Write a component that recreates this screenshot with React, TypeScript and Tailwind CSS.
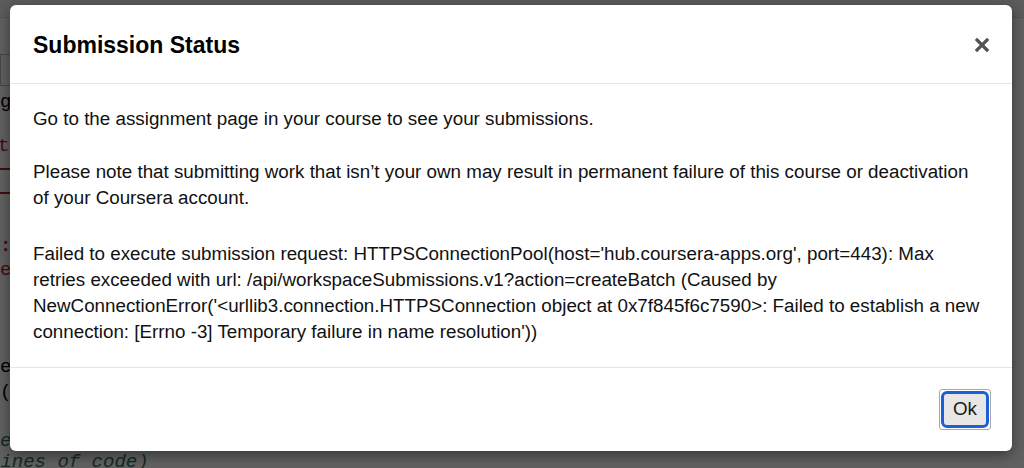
import React from "react";

const mono = { fontFamily: '"Liberation Mono", monospace' };

function Backdrop() {
  // the notebook behind the dialog, only its left and bottom edges show
  return (
    <div className="absolute inset-0 overflow-hidden bg-white" style={mono}>
      <div className="h-[18px] bg-[#f2f2f2] border-b border-[#ddd]" />
      <div className="mt-[36px] h-[32px] w-[12px] border border-[#bbb] bg-white" />
      <div className="mt-[4px] text-[19px] leading-[24px] text-black">g.</div>
      <div className="mt-[20px] flex flex-col text-[19px] leading-[24px] text-[#ba2121]">
        <span className="-ml-[2px]">t</span>
        <span className="mt-[10px] h-[2px] w-[30px] bg-[#ba2121]" />
        <span className="h-[22px]" />
        <span className="h-[2px] w-[30px] bg-[#ba2121]" />
      </div>
      <div className="mt-[40px] flex flex-col text-[19px] leading-[24px]">
        <span className="text-[#aa2222] font-bold">:</span>
        <span className="text-[#ba2121]">e</span>
      </div>
      <div className="mt-[73px] flex flex-col text-[19px] leading-[25px] text-black">
        <span>e</span>
        <span>(</span>
      </div>
      <div className="mt-[26px] flex flex-col text-[19px] leading-[21px] italic text-[#2f6f6f]">
        <span>e</span>
        <span className="-ml-[11px]">lines of code)</span>
      </div>
      <div className="absolute inset-0 bg-black/[0.62]" />
    </div>
  );
}

function CloseIcon() {
  return (
    <svg width="14" height="14" viewBox="0 0 14 14">
      <path d="M2 2 L12 12 M12 2 L2 12" stroke="#525252" strokeWidth="3.2" strokeLinecap="square" />
    </svg>
  );
}

export default function App() {
  return (
    <div
      className="relative w-[1024px] h-[468px] overflow-hidden"
      style={{ fontFamily: '"Liberation Sans", Arial, sans-serif' }}
    >
      <Backdrop />
      <div className="absolute left-[10px] top-[5px] w-[1002px] rounded-[6px] bg-white shadow-[0_4px_14px_rgba(0,0,0,0.45)]">
        <div className="flex h-[79px] items-center justify-between border-b border-[#e5e5e5] pl-[23px] pr-[20px] pt-[2px]">
          <h4 className="text-[23px] font-bold text-black">Submission Status</h4>
          <button className="flex h-[20px] w-[20px] items-center justify-center">
            <CloseIcon />
          </button>
        </div>
        <div className="px-[23px] py-[22px] text-[18.8px] leading-[26px] text-[#111]">
          <p className="mb-[27px]">Go to the assignment page in your course to see your submissions.</p>
          <p className="mb-[30px]">
            Please note that submitting work that isn’t your own may result in permanent failure of this course or
            deactivation of your Coursera account.
          </p>
          <p>
            Failed to execute submission request: HTTPSConnectionPool(host='hub.coursera-apps.org', port=443): Max
            retries exceeded with url: /api/workspaceSubmissions.v1?action=createBatch (Caused by
            NewConnectionError('&lt;urllib3.connection.HTTPSConnection object at 0x7f845f6c7590&gt;: Failed to establish
            a new connection: [Errno -3] Temporary failure in name resolution'))
          </p>
        </div>
        <div className="flex h-[84px] items-center justify-end border-t border-[#e5e5e5] pr-[21px]">
          <button className="h-[41px] w-[52px] rounded-[3px] border border-[#a8a8a8] p-[1px]">
            <span className="flex h-full w-full items-center justify-center rounded-[6px] border-[3px] border-[#1d5fd6] bg-[#e7e7e7] text-[18.8px] text-[#1a1a1a]">
              Ok
            </span>
          </button>
        </div>
      </div>
    </div>
  );
}
